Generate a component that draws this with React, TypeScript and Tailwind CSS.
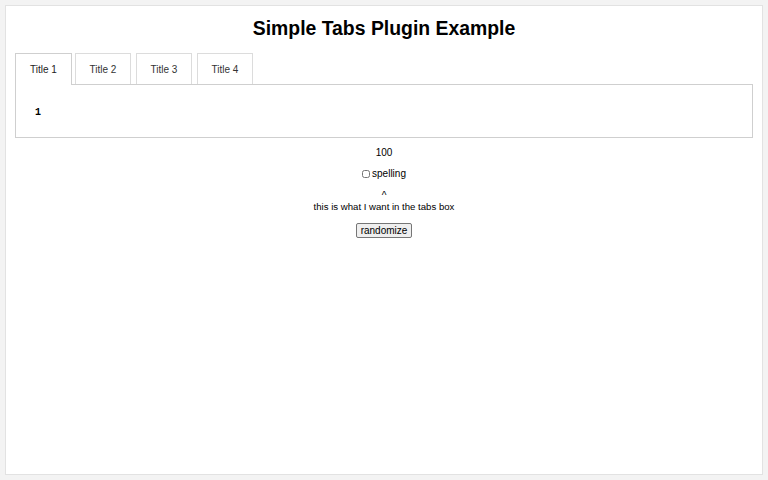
import React from "react";

export default function App() {
  const tabs = ["Title 1", "Title 2", "Title 3", "Title 4"];
  return (
    <div className="w-[768px] h-[480px] bg-[#f3f3f3] p-[5px] font-['Liberation_Sans',Arial,sans-serif] text-black">
      <div className="h-[470px] bg-white border border-[#e2e2e2] px-[9px] pt-[10px]">
        <h1 className="text-center text-[19.4px] font-bold leading-[24px] mb-[13px]">Simple Tabs Plugin Example</h1>
        <div className="flex items-end relative z-10">
          {tabs.map((t, i) => (
            <div
              key={t}
              className={
                i === 0
                  ? "h-[32px] w-[57px] bg-white border border-[#cfcfcf] border-b-0 flex items-center justify-center text-[10px] text-[#222] -mb-[1px]"
                  : i === 1
                  ? "h-[31px] w-[56px] ml-[3px] bg-white border border-[#dcdcdc] border-b-0 flex items-center justify-center text-[10px] text-[#333]"
                  : "h-[31px] w-[56px] ml-[5px] bg-white border border-[#dcdcdc] border-b-0 flex items-center justify-center text-[10px] text-[#333]"
              }
            >
              {t}
            </div>
          ))}
        </div>
        <div className="h-[54px] border border-[#cfcfcf] pl-[19px] pt-[13px]">
          <span className="font-['Liberation_Mono',monospace] font-bold text-[10px]">1</span>
        </div>
        <div className="flex flex-col items-center text-[10px] leading-[12px]">
          <div className="mt-[9px]">100</div>
          <label className="mt-[9px] flex items-center gap-[2px]">
            <input type="checkbox" className="w-[8px] h-[8px] m-0" />
            <span>spelling</span>
          </label>
          <div className="mt-[11px] leading-[10px]">^</div>
          <div className="leading-[11px] text-[9.6px]">this is what I want in the tabs box</div>
          <button className="mt-[11px] h-[15px] px-[4px] text-[10px] leading-[12px] bg-[#efefef] border border-[#767676] rounded-[2px]">randomize</button>
        </div>
      </div>
    </div>
  );
}
